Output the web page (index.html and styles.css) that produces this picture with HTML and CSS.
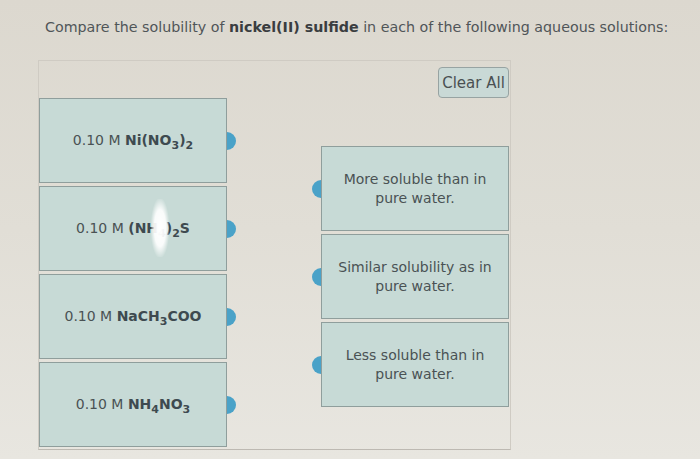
FILE: index.html
```html
<!DOCTYPE html>
<html lang="en">
<head>
    <meta charset="UTF-8">
    <title>Solubility of nickel(II) sulfide</title>
    <link rel="stylesheet" href="styles.css">
</head>
<body>
    <p class="question">Compare the solubility of <b>nickel(II) sulfide</b> in each of the following aqueous solutions:</p>

    <div class="board">
        <!-- solutions to drag -->
        <div class="col left">
            <div class="card tab-right"><span>0.10 M <b>Ni(NO<sub>3</sub>)<sub>2</sub></b></span></div>
            <div class="card tab-right"><span>0.10 M <b>(NH<sub>4</sub>)<sub>2</sub>S</b></span><span class="glare"></span></div>
            <div class="card tab-right"><span>0.10 M <b>NaCH<sub>3</sub>COO</b></span></div>
            <div class="card tab-right"><span>0.10 M <b>NH<sub>4</sub>NO<sub>3</sub></b></span></div>
        </div>

        <!-- targets -->
        <div class="col right">
            <button class="clear">Clear All</button>
            <div class="card tab-left"><span>More soluble than in<br>pure water.</span></div>
            <div class="card tab-left"><span>Similar solubility as in<br>pure water.</span></div>
            <div class="card tab-left"><span>Less soluble than in<br>pure water.</span></div>
        </div>
    </div>
</body>
</html>
```

FILE: styles.css
```css
body {
    margin: 0;
    padding: 0;
    width: 700px;
    height: 459px;
    overflow: hidden;
    font-family: "DejaVu Sans", Verdana, sans-serif;
    color: #4a4e50;
    background: linear-gradient(180deg, #dcd8cf 0%, #e1ded6 50%, #e8e6e0 100%);
}
.question {
    margin: 0;
    padding: 18px 0 0 45px;
    font-size: 14.25px;
    line-height: 18px;
    color: #505558;
}
.question b {
    color: #3a3d40;
}
.board {
    margin: 24px 0 0 38px;
    width: 473px;
    height: 390px;
    border: 1px solid #cfcbc3;
    border-bottom-color: #bdb9b2;
    display: flex;
    justify-content: space-between;
    box-sizing: border-box;
}
.col {
    display: flex;
    flex-direction: column;
    gap: 3px;
}
.left {
    padding-top: 37px;
}
.right {
    padding: 6px 1px 0 0;
    align-items: flex-end;
}
.card {
    position: relative;
    width: 188px;
    height: 85px;
    box-sizing: border-box;
    background: #c7dad6;
    border: 1px solid #8f9e9c;
    display: flex;
    align-items: center;
    justify-content: center;
    text-align: center;
    font-size: 14px;
    line-height: 19px;
    color: #4a5254;
}
.card b {
    color: #3e4a50;
}
.card sub {
    font-size: 11px;
    line-height: 0;
    vertical-align: -4px;
}
.tab-right::after,
.tab-left::before {
    content: "";
    position: absolute;
    top: 50%;
    width: 9px;
    height: 18px;
    margin-top: -9px;
    background: #4aa2c8;
}
.tab-right::after {
    right: -10px;
    border-radius: 0 9px 9px 0;
}
.tab-left::before {
    left: -10px;
    border-radius: 9px 0 0 9px;
}
.clear {
    width: 71px;
    height: 31px;
    margin-bottom: 45px;
    padding: 0;
    font-family: "DejaVu Sans", Verdana, sans-serif;
    font-size: 15px;
    color: #4a5052;
    background: #c9d9d6;
    border: 1px solid #97a3a2;
    border-radius: 4px;
}
/* light reflection over the second card */
.glare {
    position: absolute;
    left: 111px;
    top: 12px;
    width: 18px;
    height: 58px;
    background: radial-gradient(ellipse at center, #ffffff 0%, rgba(255, 255, 255, 0.9) 45%, rgba(255, 255, 255, 0) 75%);
}
```
